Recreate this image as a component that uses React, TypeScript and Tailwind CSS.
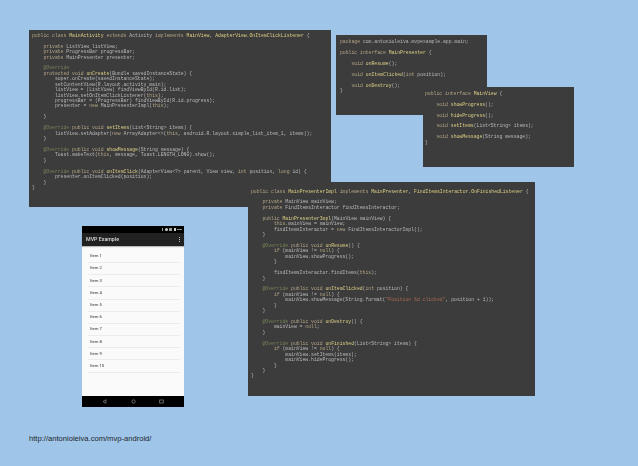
const K = "text-[#b5a586]";
const M = "text-[#dccf85]";
const A = "text-[#76845a]";
const S = "text-[#a86a52]";

type Seg = [string, string?];
type Line = Seg[];

const p = (s: string): Line => {
  const out: Line = [];
  const re = /\{(k|m|a|s):([^}]*)\}/g;
  let last = 0;
  let m: RegExpExecArray | null;
  while ((m = re.exec(s))) {
    if (m.index > last) out.push([s.slice(last, m.index)]);
    out.push([m[2], m[1] === "k" ? K : m[1] === "m" ? M : m[1] === "a" ? A : S]);
    last = m.index + m[0].length;
  }
  if (last < s.length) out.push([s.slice(last)]);
  return out;
};

function Code({ lines }: { lines: string[] }) {
  return (
    <pre className="font-['Liberation_Mono',monospace] text-[4.78px] leading-[5.45px] text-[#b9b9b9] blur-[0.35px]">
      {lines.map((l, i) => (
        <div key={i} className="h-[5.45px] whitespace-pre">
          {p(l).map((seg, j) => (
            <span key={j} className={seg[1]}>
              {seg[0]}
            </span>
          ))}
        </div>
      ))}
    </pre>
  );
}

const activity = [
  "{k:public class} {m:MainActivity} {k:extends} Activity {k:implements} {m:MainView}, {m:AdapterView.OnItemClickListener} {",
  "",
  "    {k:private} ListView listView;",
  "    {k:private} ProgressBar progressBar;",
  "    {k:private} MainPresenter presenter;",
  "",
  "    {a:@Override}",
  "    {k:protected void} {m:onCreate}(Bundle savedInstanceState) {",
  "        super.onCreate(savedInstanceState);",
  "        setContentView(R.layout.activity_main);",
  "        listView = (ListView) findViewById(R.id.list);",
  "        listView.setOnItemClickListener({k:this});",
  "        progressBar = (ProgressBar) findViewById(R.id.progress);",
  "        presenter = {k:new} MainPresenterImpl({k:this});",
  "",
  "    }",
  "",
  "    {a:@Override} {k:public void} {m:setItems}(List<String> items) {",
  "        listView.setAdapter({k:new} ArrayAdapter<>({k:this}, android.R.layout.simple_list_item_1, items));",
  "    }",
  "",
  "    {a:@Override} {k:public void} {m:showMessage}(String message) {",
  "        Toast.makeText({k:this}, message, Toast.LENGTH_LONG).show();",
  "    }",
  "",
  "    {a:@Override} {k:public void} {m:onItemClick}(AdapterView<?> parent, View view, {k:int} position, {k:long} id) {",
  "        presenter.onItemClicked(position);",
  "    }",
  "}",
];

const presenterIface = [
  "{k:package} com.antonioleiva.mvpexample.app.main;",
  "",
  "{k:public interface} {m:MainPresenter} {",
  "",
  "    {k:void} {m:onResume}();",
  "",
  "    {k:void} {m:onItemClicked}({k:int} position);",
  "",
  "    {k:void} {m:onDestroy}();",
  "}",
];

const viewIface = [
  "{k:public interface} {m:MainView} {",
  "",
  "    {k:void} {m:showProgress}();",
  "",
  "    {k:void} {m:hideProgress}();",
  "",
  "    {k:void} {m:setItems}(List<String> items);",
  "",
  "    {k:void} {m:showMessage}(String message);",
  "}",
];

const impl = [
  "{k:public class} {m:MainPresenterImpl} {k:implements} {m:MainPresenter}, {m:FindItemsInteractor.OnFinishedListener} {",
  "",
  "    {k:private} MainView mainView;",
  "    {k:private} FindItemsInteractor findItemsInteractor;",
  "",
  "    {k:public} {m:MainPresenterImpl}(MainView mainView) {",
  "        {k:this}.mainView = mainView;",
  "        findItemsInteractor = {k:new} FindItemsInteractorImpl();",
  "    }",
  "",
  "    {a:@Override} {k:public void} {m:onResume}() {",
  "        {k:if} (mainView != {k:null}) {",
  "            mainView.showProgress();",
  "        }",
  "",
  "        findItemsInteractor.findItems({k:this});",
  "    }",
  "",
  "    {a:@Override} {k:public void} {m:onItemClicked}({k:int} position) {",
  "        {k:if} (mainView != {k:null}) {",
  '            mainView.showMessage(String.format({s:"Position %d clicked"}, position + 1));',
  "        }",
  "    }",
  "",
  "    {a:@Override} {k:public void} {m:onDestroy}() {",
  "        mainView = {k:null};",
  "    }",
  "",
  "    {a:@Override} {k:public void} {m:onFinished}(List<String> items) {",
  "        {k:if} (mainView != {k:null}) {",
  "            mainView.setItems(items);",
  "            mainView.hideProgress();",
  "        }",
  "    }",
  "}",
];

const items = ["Item 1", "Item 2", "Item 3", "Item 4", "Item 5", "Item 6", "Item 7", "Item 8", "Item 9", "Item 10"];

function Phone() {
  return (
    <div className="absolute left-[82px] top-[226px] flex h-[181px] w-[102px] flex-col bg-[#fafafa] font-['Roboto',sans-serif]">
      <div className="flex h-[7px] items-center justify-end gap-[1.5px] bg-black pr-[2px] blur-[0.3px]">
        <div className="h-[2.5px] w-[1px] bg-[#9a9a9a]" />
        <div className="h-[3px] w-[3px] rounded-full bg-[#cfcfcf]" />
        <div className="h-[3px] w-[3px] bg-[#9a9a9a]" />
        <div className="h-[3px] w-[2px] bg-[#cfcfcf]" />
        <div className="h-[1.5px] w-[5px] bg-[#8a8a8a]" />
      </div>
      <div className="flex h-[13px] items-center justify-between bg-[#212121] pl-[4px] pr-[4px] shadow-[0_1px_1px_rgba(0,0,0,0.25)]">
        <span className="text-[5.3px] font-medium leading-none text-[#dcdcdc] blur-[0.25px]">MVP Example</span>
        <div className="flex flex-col gap-[0.8px]">
          <div className="h-[1px] w-[1px] bg-[#bbbbbb]" />
          <div className="h-[1px] w-[1px] bg-[#bbbbbb]" />
          <div className="h-[1px] w-[1px] bg-[#bbbbbb]" />
        </div>
      </div>
      <div className="flex-1 pl-[6px] pr-[4px] pt-[4.8px]">
        {items.map((t) => (
          <div key={t} className="flex h-[12.2px] items-center border-b-[0.5px] border-[#ececec] pl-[2px]">
            <span className="text-[4.2px] leading-none text-[#333333] blur-[0.25px]">{t}</span>
          </div>
        ))}
      </div>
      <div className="flex h-[11px] items-center justify-between bg-black pl-[20px] pr-[20px]">
        <svg width="5" height="5" viewBox="0 0 5 5">
          <path d="M4 .7 1 2.5 4 4.3Z" fill="none" stroke="#8c8c8c" strokeWidth="0.7" />
        </svg>
        <svg width="5" height="5" viewBox="0 0 5 5">
          <circle cx="2.5" cy="2.5" r="1.7" fill="none" stroke="#8c8c8c" strokeWidth="0.7" />
        </svg>
        <svg width="5" height="5" viewBox="0 0 5 5">
          <rect x=".7" y="1" width="3.6" height="3" fill="none" stroke="#8c8c8c" strokeWidth="0.7" />
        </svg>
      </div>
    </div>
  );
}

export default function App() {
  return (
    <div className="relative h-[466px] w-[638px] overflow-hidden bg-[#9fc5e8]">
      <div className="absolute left-[29px] top-[30px] h-[177px] w-[302px] bg-[#3c3c3c] pl-[3px] pt-[2.8px]">
        <Code lines={activity} />
      </div>
      <div className="absolute left-[336px] top-[35px] h-[80px] w-[151px] bg-[#3c3c3c] pl-[4px] pt-[4.2px]">
        <Code lines={presenterIface} />
      </div>
      <div className="absolute left-[423px] top-[87px] h-[80px] w-[151px] bg-[#3c3c3c] pl-[2px] pt-[3.8px]">
        <Code lines={viewIface} />
      </div>
      <div className="absolute left-[248px] top-[182px] h-[214px] w-[287px] bg-[#3c3c3c] pl-[3px] pt-[6.5px]">
        <Code lines={impl} />
      </div>
      <Phone />
      <div className="absolute left-[29px] top-[434px] font-['Liberation_Sans',sans-serif] text-[7.6px] leading-[10px] text-[#22262c]">
        http://antonioleiva.com/mvp-android/
      </div>
    </div>
  );
}
